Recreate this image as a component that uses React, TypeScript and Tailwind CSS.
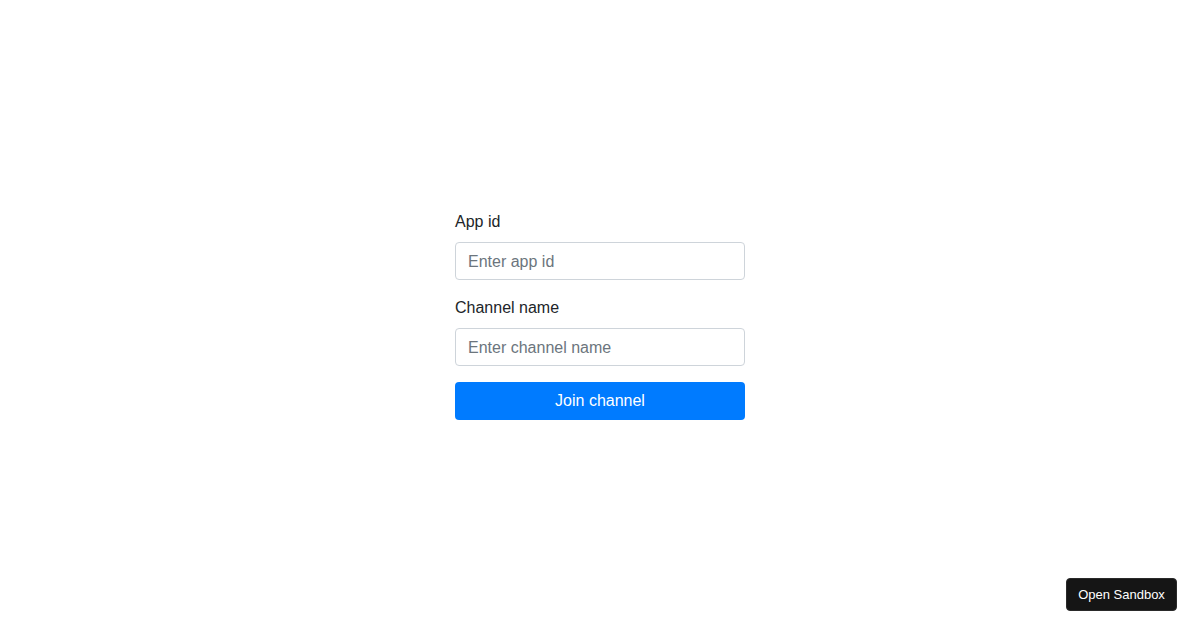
export default function App() {
  return (
    <div
      className="relative w-full h-[630px] bg-white flex items-center justify-center"
      style={{ fontFamily: '"Liberation Sans", Arial, sans-serif' }}
    >
      <form className="w-[290px] flex flex-col" onSubmit={(e) => e.preventDefault()}>
        <label className="block text-[16px] leading-[24px] text-[#212529] mb-2">App id</label>
        <input
          className="block w-full h-[38px] pt-[7px] pb-[5px] px-3 leading-[24px] text-[16px] text-[#495057] border border-[#ced4da] rounded-[4px] placeholder:text-[#6c757d] outline-none mb-4"
          placeholder="Enter app id"
        />
        <label className="block text-[16px] leading-[24px] text-[#212529] mb-2">Channel name</label>
        <input
          className="block w-full h-[38px] pt-[7px] pb-[5px] px-3 leading-[24px] text-[16px] text-[#495057] border border-[#ced4da] rounded-[4px] placeholder:text-[#6c757d] outline-none mb-4"
          placeholder="Enter channel name"
        />
        <button
          type="submit"
          className="w-full h-[38px] bg-[#007bff] text-white text-[16px] rounded-[4px]"
        >
          Join channel
        </button>
      </form>
      <button className="absolute right-[23px] bottom-[19px] w-[111px] h-[33px] bg-[#151515] text-white text-[13px] rounded-[4px] border border-[#2a2a2a]">
        Open Sandbox
      </button>
    </div>
  );
}
